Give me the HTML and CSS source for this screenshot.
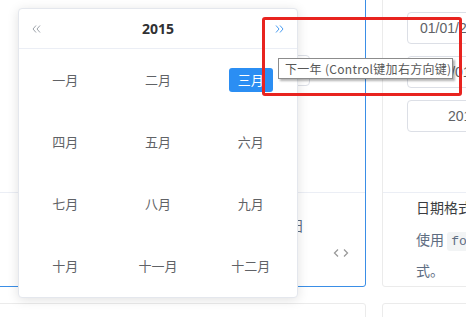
FILE: index.html
```html
<!DOCTYPE html>
<html lang="zh">
<head>
<meta charset="utf-8">
<link rel="stylesheet" href="styles.css">
</head>
<body>
<div class="page">
  <section class="card card--active">
    <div class="demo">
      <div class="demo-box"><span class="demo-check"></span></div>
    </div>
    <div class="meta">
      <p class="meta-text">选择日期范围时默认显示为今天和后一日</p>
      <div class="meta-ctrl">
        <svg class="code-icon" width="16" height="8" viewBox="0 0 16 8"><path d="M5 0.5 L1.5 4 L5 7.5 M11 0.5 L14.5 4 L11 7.5" fill="none" stroke="#9a9a9a" stroke-width="1.3"/></svg>
      </div>
    </div>
  </section>
  <section class="card">
    <div class="demo demo--inputs">
      <div class="input">01/01/2015</div>
      <div class="input">2015/01/01</div>
      <div class="input input--wide">2015 第 1 周</div>
    </div>
    <div class="meta meta--desc">
      <h3 class="desc-title">日期格式</h3>
      <p class="desc-text">使用 <code class="code">format</code> 指定输入框的格<br>式。</p>
    </div>
  </section>
  <section class="card card--low"></section>
  <section class="card card--low"></section>
</div>

<div class="picker">
  <div class="picker-head">
    <svg class="arrow" width="9" height="8" viewBox="0 0 9 8"><path d="M4 0.5 L1 4 L4 7.5 M8 0.5 L5 4 L8 7.5" fill="none" stroke="#9ea3ab" stroke-width="1"/></svg>
    <span class="year">2015</span>
    <svg class="arrow" width="9" height="8" viewBox="0 0 9 8"><path d="M1 0.5 L4 4 L1 7.5 M5 0.5 L8 4 L5 7.5" fill="none" stroke="#4a9cf0" stroke-width="1"/></svg>
  </div>
  <div class="months">
    <div class="month"><span class="mlabel">一月</span></div>
    <div class="month"><span class="mlabel">二月</span></div>
    <div class="month"><span class="mlabel mlabel--current">三月</span></div>
    <div class="month"><span class="mlabel">四月</span></div>
    <div class="month"><span class="mlabel">五月</span></div>
    <div class="month"><span class="mlabel">六月</span></div>
    <div class="month"><span class="mlabel">七月</span></div>
    <div class="month"><span class="mlabel">八月</span></div>
    <div class="month"><span class="mlabel">九月</span></div>
    <div class="month"><span class="mlabel">十月</span></div>
    <div class="month"><span class="mlabel">十一月</span></div>
    <div class="month"><span class="mlabel">十二月</span></div>
  </div>
</div>

<div class="tooltip">下一年 (Control键加右方向键)</div>
<div class="highlight"></div>
</body>
</html>
```

FILE: styles.css
```css
html, body {
  margin: 0;
  padding: 0;
  background: #ffffff;
  overflow: hidden;
}
body {
  width: 466px;
  height: 317px;
  position: relative;
  font-family: "Liberation Sans", "Noto Sans CJK SC", sans-serif;
  color: #606266;
}

.page {
  display: grid;
  grid-template-columns: 401px 401px;
  grid-template-rows: 300px 200px;
  column-gap: 16px;
  row-gap: 16px;
  margin: -13px 0 0 -35px;
}

.card {
  box-sizing: border-box;
  border: 1px solid #ebebeb;
  border-radius: 3px;
  background: #fff;
  display: flex;
  flex-direction: column;
}
.card--active {
  border-color: #3a8ee6;
}

.demo {
  height: 205px;
  box-sizing: border-box;
  padding: 24px;
  border-bottom: 1px solid #ebeef5;
}
.demo-box {
  margin: 43px 31px 0 auto;
  width: 26px;
  height: 31px;
  box-sizing: border-box;
  border: 1px solid #dcdfe6;
  border-radius: 4px;
  position: relative;
}
.demo-check {
  display: block;
  width: 8px;
  height: 9px;
  border: 1px solid #dcdfe6;
  margin: 11px 0 0 1px;
}

.demo--inputs {
  display: flex;
  flex-direction: column;
  gap: 12px;
}
.input {
  box-sizing: border-box;
  height: 32px;
  width: 220px;
  border: 1px solid #dcdfe6;
  border-radius: 4px;
  padding: 0 12px;
  line-height: 30px;
  font-size: 14px;
  color: #606266;
  white-space: nowrap;
}
.input--wide {
  padding-left: 40px;
}

.meta {
  flex: 1;
  font-size: 14px;
  line-height: 28px;
}
.meta-text {
  margin: 18px 0 0;
  padding-right: 61px;
  text-align: right;
  color: #5e6d82;
  font-family: "Noto Sans CJK SC", sans-serif;
  white-space: nowrap;
  overflow: hidden;
}
.meta-ctrl {
  display: flex;
  justify-content: flex-end;
  align-items: center;
  height: 28px;
  padding-right: 16px;
}

.meta--desc {
  font-family: "Noto Sans CJK SC", sans-serif;
}
.desc-title {
  display: inline-block;
  margin: -11px 0 0 25px;
  padding: 0 8px;
  background: #fff;
  font-size: 14px;
  font-weight: 400;
  line-height: 22px;
  color: #3a3c40;
}
.desc-text {
  margin: 4px 0 0 33px;
  color: #5e6d82;
  font-size: 14px;
  line-height: 28px;
}
.code {
  background: #f2f4f5;
  color: #5e6d82;
  font-family: "Liberation Mono", monospace;
  font-size: 13px;
  padding: 2px 4px;
  border-radius: 3px;
}

/* date picker popup */
.picker {
  position: absolute;
  left: 18px;
  top: 8px;
  width: 280px;
  height: 290px;
  box-sizing: border-box;
  background: #fff;
  border: 1px solid #e4e7ed;
  border-radius: 4px;
  box-shadow: 0 2px 12px rgba(0, 0, 0, 0.12);
  display: flex;
  flex-direction: column;
  font-family: "Noto Sans CJK SC", sans-serif;
}
.picker-head {
  height: 39px;
  border-bottom: 1px solid #ebeef5;
  display: flex;
  align-items: center;
  justify-content: space-between;
  padding: 0 13px 0 13px;
}
.year {
  font-family: "Noto Sans", "Liberation Sans", sans-serif;
  font-size: 14px;
  font-weight: 700;
  color: #303133;
}
.months {
  flex: 1;
  display: grid;
  grid-template-columns: repeat(3, 1fr);
  grid-template-rows: repeat(4, 1fr);
}
.month {
  display: flex;
  align-items: center;
  justify-content: center;
}
.mlabel {
  font-size: 13px;
  line-height: 24px;
  height: 24px;
  padding: 0 9px;
  border-radius: 3px;
  color: #606266;
}
.mlabel--current {
  background: #2b8ef3;
  color: #fff;
}

/* native tooltip */
.tooltip {
  position: absolute;
  left: 278px;
  top: 58px;
  width: 175px;
  height: 21px;
  box-sizing: border-box;
  padding: 0 0 0 6px;
  border: 1px solid #8c8c8c;
  background: #fff;
  color: #575757;
  font-family: "Noto Sans CJK SC", sans-serif;
  font-size: 12px;
  letter-spacing: 0.3px;
  line-height: 19px;
  white-space: nowrap;
  box-shadow: 2px 2px 2px rgba(0, 0, 0, 0.3);
}

/* annotation box */
.highlight {
  position: absolute;
  left: 262px;
  top: 17px;
  width: 200px;
  height: 79px;
  box-sizing: border-box;
  border: 3px solid #e8231f;
  border-radius: 3px;
}
```
